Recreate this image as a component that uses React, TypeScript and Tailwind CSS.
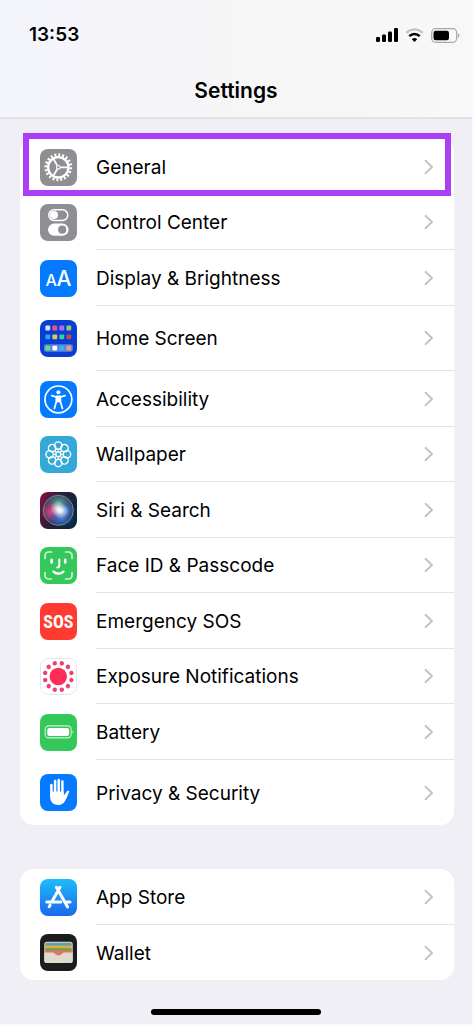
import type { ReactNode } from 'react';
import { clsx } from 'clsx';

type SettingsItem = {
  label: string;
  href: string;
  icon: ReactNode;
  tall?: boolean;
  highlighted?: boolean;
};

const Tile = ({ fill, children }: { fill: string; children?: ReactNode }) => (
  <svg viewBox="0 0 37 37" className="size-[37px] shrink-0" aria-hidden="true">
    <rect width="37" height="37" rx="8" fill={fill} />
    {children}
  </svg>
);

const GeneralIcon = () => (
  <Tile fill="#8e8e93">
    <g fill="none" stroke="#fff">
      <circle cx="18.3" cy="18.3" r="12.5" strokeWidth="2.8" pathLength="40" strokeDasharray="1 1" />
      <circle cx="18.3" cy="18.3" r="10.2" strokeWidth="2.4" />
      <circle cx="18.3" cy="18.3" r="1.8" strokeWidth="1.2" />
      <path d="M20.2 18.3H28M17.3 16.6 13.2 9.5M17.3 20l-4.100 7.100" strokeWidth="1.8" />
    </g>
  </Tile>
);

const ControlCenterIcon = () => (
  <Tile fill="#8e8e93">
    <rect x="8.8" y="5.8" width="19" height="10.6" rx="5.3" fill="none" stroke="#fff" strokeWidth="1.5" />
    <circle cx="14" cy="11.1" r="4" fill="#fff" />
    <rect x="8" y="19.6" width="20.6" height="12.2" rx="6.1" fill="#fff" />
    <circle cx="22.2" cy="25.7" r="4.1" fill="#8e8e93" />
  </Tile>
);

const DisplayIcon = () => (
  <Tile fill="#057aff">
    <g fill="#fff" fontFamily="Inter, sans-serif" fontWeight="500">
      <text x="5.5" y="26" fontSize="16">A</text>
      <text x="16.5" y="26" fontSize="21">A</text>
    </g>
  </Tile>
);

const appColumns = [5.4, 12.4, 19.4, 26.4];
const appRows = [
  { y: 5.6, colors: ['#d3e4f5', '#f0567c', '#b06af2', '#9acb5c'] },
  { y: 14.4, colors: ['#2ba4f3', '#e6cc45', '#35cfa4', '#d63f4b'] },
  { y: 25.7, colors: ['#5fe07c', '#ffffff', '#35b5f5', '#e5a665'] },
];

const HomeScreenIcon = () => (
  <Tile fill="#0a3dd3">
    <rect x="4" y="24.2" width="28.8" height="7.6" rx="2" fill="#5f82df" />
    {appRows.map((row) =>
      row.colors.map((color, i) => (
        <rect key={color} x={appColumns[i]} y={row.y} width="4.8" height="4.8" rx="1" fill={color} />
      ))
    )}
  </Tile>
);

const AccessibilityIcon = () => (
  <Tile fill="#057aff">
    <circle cx="18.4" cy="18.4" r="13.4" fill="none" stroke="#fff" strokeWidth="1.7" />
    <circle cx="18.4" cy="11.2" r="2" fill="#fff" />
    <path
      d="M11.8 14.6 16.4 16v4.5l-2 7M25 14.6 20.4 16v4.5l2 7"
      fill="none"
      stroke="#fff"
      strokeWidth="1.7"
      strokeLinecap="round"
      strokeLinejoin="round"
    />
    <path d="M15.8 14.6h5.2v6.8l-1.2.2-1.4-.4-1.4.4-1.2-.2z" fill="#fff" />
  </Tile>
);

const WallpaperIcon = () => (
  <Tile fill="#34a8d6">
    <g fill="none" stroke="#fff" strokeWidth="1.4">
      {[0, 45, 90, 135, 180, 225, 270, 315].map((angle) => (
        <g key={angle} transform={`rotate(${angle} 18.3 18.3)`}>
          <circle cx="18.3" cy="9.6" r="3.7" />
          <path d="M18.3 13.3v2.6" strokeWidth="1" />
        </g>
      ))}
      <circle cx="18.3" cy="18.3" r="2.5" />
    </g>
  </Tile>
);

const SiriIcon = () => (
  <Tile fill="url(#siri-bg)">
    <defs>
      <linearGradient id="siri-bg" x1="0" y1="0.2" x2="1" y2="0.6">
        <stop offset="0" stopColor="#7a1440" />
        <stop offset="0.45" stopColor="#2a1d38" />
        <stop offset="1" stopColor="#0a2940" />
      </linearGradient>
      <radialGradient id="siri-pink">
        <stop offset="0" stopColor="#f0468c" stopOpacity="0.9" />
        <stop offset="1" stopColor="#f0468c" stopOpacity="0" />
      </radialGradient>
      <radialGradient id="siri-blue">
        <stop offset="0" stopColor="#3c8cf0" stopOpacity="0.95" />
        <stop offset="1" stopColor="#2864d2" stopOpacity="0" />
      </radialGradient>
      <radialGradient id="siri-teal">
        <stop offset="0" stopColor="#5cc8b4" stopOpacity="0.8" />
        <stop offset="1" stopColor="#3c9c90" stopOpacity="0" />
      </radialGradient>
      <radialGradient id="siri-glow">
        <stop offset="0" stopColor="#fff" />
        <stop offset="0.3" stopColor="#fff" stopOpacity="0.85" />
        <stop offset="1" stopColor="#fff" stopOpacity="0" />
      </radialGradient>
    </defs>
    <circle cx="18.3" cy="18.3" r="15" fill="#5a4a6c" fillOpacity="0.6" />
    <ellipse cx="19" cy="10.5" rx="13" ry="9" fill="url(#siri-teal)" />
    <circle cx="11" cy="20" r="10" fill="url(#siri-pink)" />
    <ellipse cx="21" cy="26" rx="13" ry="9" fill="url(#siri-blue)" />
    <circle cx="26" cy="18" r="9" fill="url(#siri-blue)" />
    <ellipse cx="19.6" cy="18" rx="10" ry="8" fill="url(#siri-glow)" transform="rotate(35 19.6 18)" />
    <circle cx="18.3" cy="18.3" r="15" fill="none" stroke="#5d9294" strokeWidth="1" />
  </Tile>
);

const FaceIdIcon = () => (
  <Tile fill="#34c759">
    <g fill="none" stroke="#fff" strokeLinecap="round">
      <path
        d="M5 11.5V8.8C5 6.4 6.4 5 8.8 5h2.7M25.5 5h2.7C30.6 5 32 6.4 32 8.8v2.7M32 25.5v2.7c0 2.4-1.4 3.8-3.8 3.8h-2.7M11.5 32H8.800C6.4 32 5 30.6 5 28.2v-2.7"
        strokeWidth="1.7"
        strokeOpacity="0.75"
      />
      <path d="M11.6 12.8v2.6M25.2 12.8v2.6" strokeWidth="2.6" />
      <path d="M19.3 12.4v6.1c0 1.3-.7 1.9-2 1.9" strokeWidth="2" />
      <path d="M13.4 24.6c2.7 2.7 7.4 2.7 10.1 0" strokeWidth="2.2" />
    </g>
  </Tile>
);

const SosIcon = () => (
  <Tile fill="#ff3a30">
    <text
      x="18.4"
      y="25"
      fill="#fff"
      fontFamily="'Liberation Sans Narrow', 'Roboto Condensed', Roboto, sans-serif"
      fontSize="18"
      fontWeight="700"
      textAnchor="middle"
    >
      SOS
    </text>
  </Tile>
);

const ExposureIcon = () => (
  <Tile fill="#fff">
    <rect x="0.5" y="0.5" width="36" height="36" rx="8" fill="none" stroke="#e6e6e9" strokeWidth="1" />
    <circle cx="18.3" cy="18.5" r="8.7" fill="#ff2d55" />
    {[15, 45, 75, 105, 135, 165, 195, 225, 255, 285, 315, 345].map((angle) => (
      <circle
        key={angle}
        cx="18.3"
        cy="4.9"
        r="2.2"
        fill="#ee3d6e"
        transform={`rotate(${angle} 18.3 18.5)`}
      />
    ))}
  </Tile>
);

const BatteryIcon = () => (
  <Tile fill="#34c759">
    <rect x="5.2" y="11.9" width="26" height="12" rx="3.6" fill="none" stroke="#fff" strokeOpacity="0.75" strokeWidth="1.1" />
    <rect x="7.3" y="13.9" width="21.8" height="8" rx="1.8" fill="#fff" />
    <path d="M32.6 16.2c1.2.5 1.2 3 0 3.5z" fill="#fff" fillOpacity="0.75" />
  </Tile>
);

const PrivacyIcon = () => (
  <Tile fill="#057aff">
    <path
      d="M11.4 10.9v11M15.1 7v13M18.7 5.9v13M22.4 7.6v13"
      stroke="#fff"
      strokeWidth="2.5"
      strokeLinecap="round"
    />
    <path
      d="M10.15 17.5h13.5v4.3l3.1-4.4c.8-1.1 2.9-.7 2.3.8-1.1 2.6-2.4 5.7-3.7 8.3-1.4 2.8-3.9 4.5-7.3 4.5-5 0-7.9-3.2-7.9-8.2z"
      fill="#fff"
    />
  </Tile>
);

const AppStoreIcon = () => (
  <Tile fill="url(#store-bg)">
    <defs>
      <linearGradient id="store-bg" x1="0" y1="0" x2="0" y2="1">
        <stop offset="0" stopColor="#1ebcfa" />
        <stop offset="1" stopColor="#1c67ee" />
      </linearGradient>
    </defs>
    <g stroke="#fff" strokeWidth="3" strokeLinecap="round">
      <path d="M20 8.3 12 22.5M10.1 26.2l-.9 1.5M16.4 8.3l11.2 19.6M6.8 23h14M27 23h3" />
    </g>
  </Tile>
);

const WalletIcon = () => (
  <Tile fill="#1c1c1d">
    <rect x="4.3" y="7.7" width="28.4" height="21.3" rx="2.5" fill="#dedace" />
    <path d="M5.3 10.2c0-.8.6-1.5 1.5-1.5h23.4c.9 0 1.500.7 1.500 1.500v2H5.3z" fill="#649db2" />
    <path d="M5.3 11.6h26.4v3H5.3z" fill="#d6b344" />
    <path d="M5.3 14h26.4v3H5.3z" fill="#75a34b" />
    <path d="M5.3 16.7h26.4v3H5.3z" fill="#ee6f62" />
    <path d="M4.3 18.6h8.600c1.7 0 2.6 2.9 5.6 2.9s3.9-2.9 5.6-2.9h8.6v8.1a2.3 2.3 0 0 1-2.3 2.300H6.6a2.3 2.3 0 0 1-2.3-2.3z" fill="#dedace" />
    <path d="M12.9 18.6h11.2c-1.7 0-2.6 2.9-5.6 2.9s-3.9-2.9-5.6-2.9z" fill="#ee6f62" />
  </Tile>
);

const mainItems: SettingsItem[] = [
  { label: 'General', href: '#general', icon: <GeneralIcon />, highlighted: true },
  { label: 'Control Center', href: '#control-center', icon: <ControlCenterIcon /> },
  { label: 'Display & Brightness', href: '#display', icon: <DisplayIcon /> },
  { label: 'Home Screen', href: '#home-screen', icon: <HomeScreenIcon />, tall: true },
  { label: 'Accessibility', href: '#accessibility', icon: <AccessibilityIcon /> },
  { label: 'Wallpaper', href: '#wallpaper', icon: <WallpaperIcon /> },
  { label: 'Siri & Search', href: '#siri', icon: <SiriIcon /> },
  { label: 'Face ID & Passcode', href: '#face-id', icon: <FaceIdIcon /> },
  { label: 'Emergency SOS', href: '#sos', icon: <SosIcon /> },
  { label: 'Exposure Notifications', href: '#exposure', icon: <ExposureIcon /> },
  { label: 'Battery', href: '#battery', icon: <BatteryIcon /> },
  { label: 'Privacy & Security', href: '#privacy', icon: <PrivacyIcon />, tall: true },
];

const storeItems: SettingsItem[] = [
  { label: 'App Store', href: '#app-store', icon: <AppStoreIcon /> },
  { label: 'Wallet', href: '#wallet', icon: <WalletIcon /> },
];

const Chevron = () => (
  <svg viewBox="0 0 10 16" className="h-4 w-[10px] shrink-0" aria-hidden="true">
    <path d="M1.5 1.8 8 8l-6.500 6.200" fill="none" stroke="#c3c3c6" strokeWidth="1.9" strokeLinecap="round" strokeLinejoin="round" />
  </svg>
);

const SettingsGroup = ({ items }: { items: SettingsItem[] }) => (
  <ul className="rounded-[14px] bg-white">
    {items.map((item) => (
      <li
        key={item.label}
        className={clsx('group relative', item.tall ? 'h-[65px]' : 'odd:h-14 even:h-[55px]')}
      >
        <a href={item.href} className="flex h-full items-center gap-[19px] pl-5">
          {item.icon}
          <span className="flex flex-1 items-center justify-between self-stretch border-b border-[#e2e2e5] pr-5 group-last:border-b-0">
            <span className="pt-0.5 text-[19px] leading-6 text-black">{item.label}</span>
            <Chevron />
          </span>
        </a>
        {item.highlighted && (
          <span className="pointer-events-none absolute inset-x-[3px] -top-[6px] -bottom-px border-[6px] border-[#ab3ff5]" />
        )}
      </li>
    ))}
  </ul>
);

const StatusBar = () => (
  <div className="flex items-center justify-between pt-[23px] pr-3 pl-[29px]">
    <span className="text-[19px] leading-6 font-semibold">13:53</span>
    <div className="flex items-center gap-[7px]">
      <svg viewBox="0 0 22 14" className="h-[14px] w-[22px]" aria-label="Signal">
        <rect x="0" y="9" width="4" height="5" rx="1.2" />
        <rect x="6" y="6.5" width="4" height="7.5" rx="1.2" />
        <rect x="12" y="3.5" width="4" height="10.5" rx="1.2" />
        <rect x="18" y="0" width="4" height="14" rx="1.2" />
      </svg>
      <svg viewBox="0 0 19 14" className="h-[14px] w-[19px]" aria-label="Wi-Fi">
        <path d="M1.3 4.8c4.7-4.6 11.7-4.6 16.4 0" fill="none" stroke="#c4c4c4" strokeWidth="2.4" />
        <path d="M4.3 8.1c3-2.9 7.4-2.9 10.4 0" fill="none" stroke="#000" strokeWidth="2.5" />
        <path d="M9.5 14 6.8 11.2c1.5-1.5 3.9-1.5 5.4 0z" />
      </svg>
      <svg viewBox="0 0 29 15" className="h-[15px] w-[29px]" aria-label="Battery level">
        <rect x="0.7" y="0.7" width="25" height="13.6" rx="4" fill="none" stroke="#a9a9a9" strokeWidth="1.3" />
        <rect x="2.5" y="2.7" width="15.5" height="9.6" rx="2.2" />
        <path d="M27 5.2c1.900.9 1.900 3.700 0 4.600z" fill="#a9a9a9" />
      </svg>
    </div>
  </div>
);

export default function App() {
  return (
    <div className="flex min-h-screen flex-col border-r-2 border-[#fafafc] bg-[#f0eff5] font-['Inter',sans-serif] text-black">
      <header className="border-b-2 border-[#e1e1e4] bg-linear-to-r from-[#f4f4fc] via-[#f6f6f7] to-[#f8f8f8] pb-[14px]">
        <StatusBar />
        <h1 className="pt-8 text-center text-[21px] leading-6 font-semibold">Settings</h1>
      </header>

      <main className="flex flex-1 flex-col gap-11 pt-5 pr-[18px] pl-5">
        <SettingsGroup items={mainItems} />
        <SettingsGroup items={storeItems} />
      </main>

      <footer className="flex justify-center border-b-2 border-[#fafafc] pb-[9px]">
        <span className="h-[6px] w-[170px] rounded-full bg-black" />
      </footer>
    </div>
  );
}
